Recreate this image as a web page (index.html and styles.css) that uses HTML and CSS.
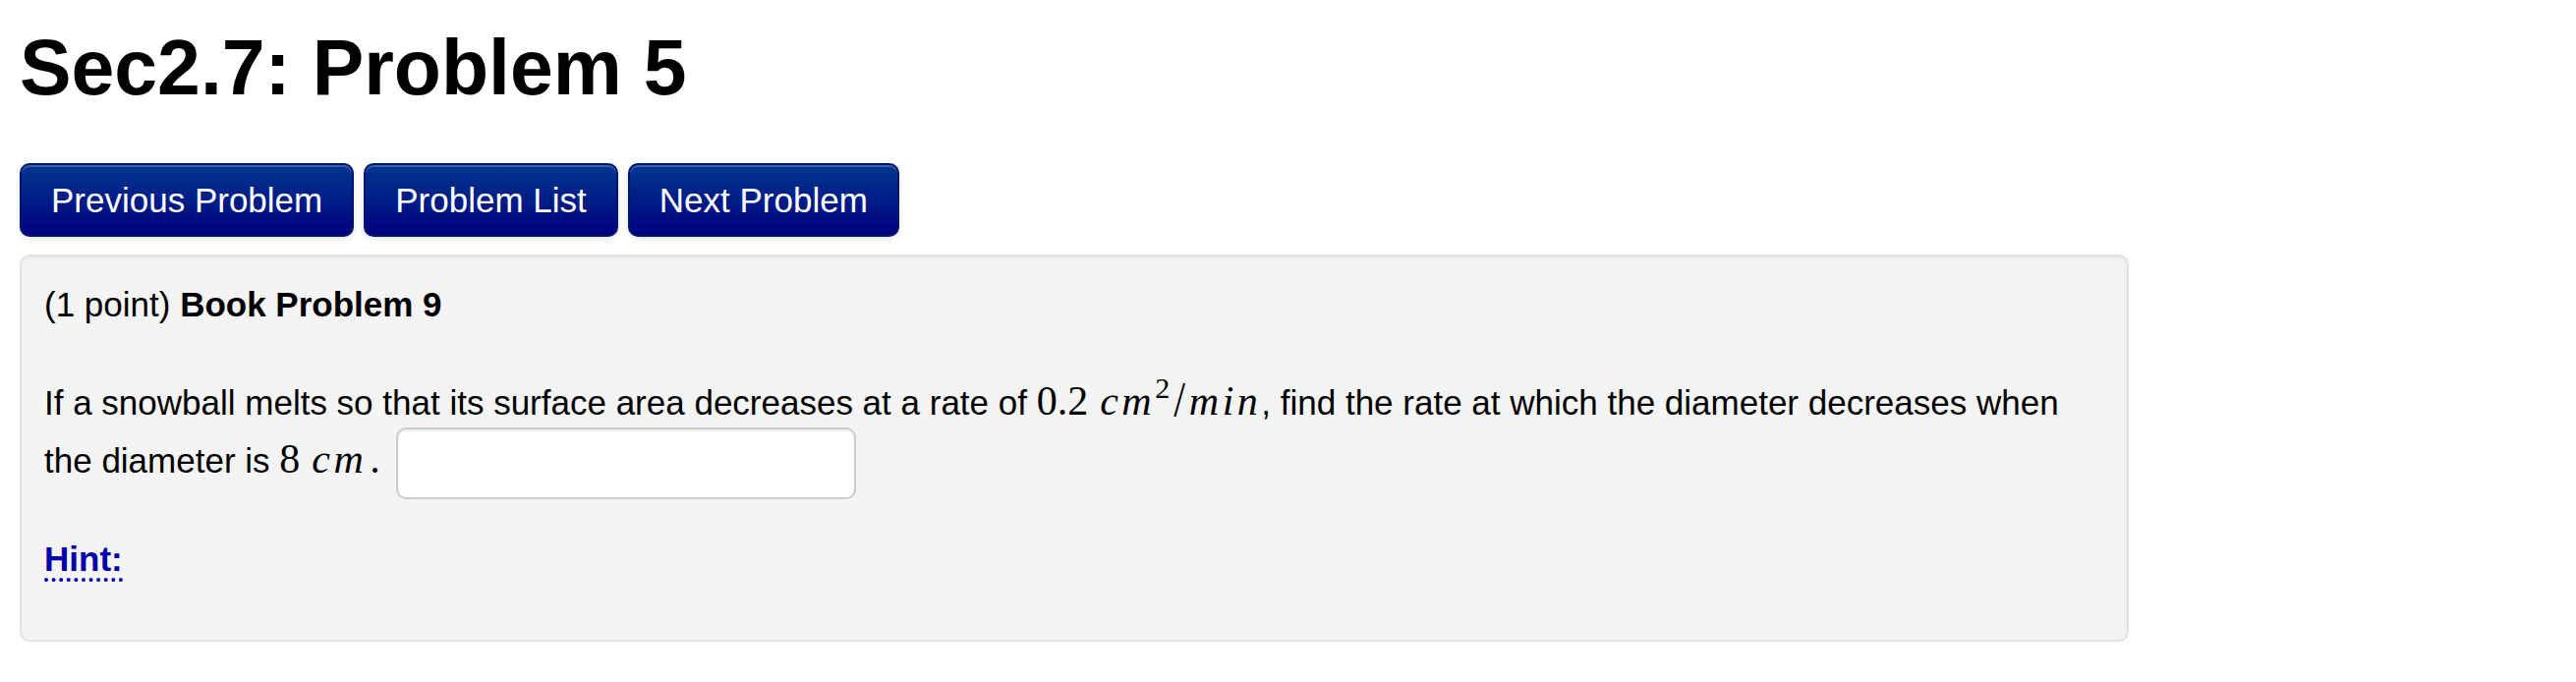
FILE: index.html
```html
<!DOCTYPE html>
<html lang="en">
<head>
<meta charset="utf-8">
<title>Sec2.7: Problem 5</title>
<link rel="stylesheet" href="styles.css">
</head>
<body>
<div class="page">
  <h1 class="title">Sec2.7: Problem 5</h1>
  <div class="nav">
    <a class="btn" href="#">Previous Problem</a>
    <a class="btn" href="#">Problem List</a>
    <a class="btn" href="#">Next Problem</a>
  </div>
  <div class="panel">
    <p class="points">(1 point) <b>Book Problem 9</b></p>
    <p class="question">If a snowball melts so that its surface area decreases at a rate of <span class="math"><span class="mn">0.2</span><span class="mi sp">cm</span><span class="sup">2</span><span class="mo">/</span><span class="mi">min</span></span>, find the rate at which the diameter decreases when<br>the diameter is <span class="math"><span class="mn">8</span><span class="mi sp">cm</span><span class="mn dot">.</span></span> <input class="answer" type="text"></p>
    <p class="hint-row"><span class="hint">Hint:</span></p>
  </div>
</div>
</body>
</html>
```
FILE: styles.css
```css
html, body {
  margin: 0;
  padding: 0;
  background: #ffffff;
}

body {
  font-family: "Liberation Sans", Arial, sans-serif;
  font-size: 35px;
  line-height: 50px;
  color: #000000;
}

.page {
  padding: 0 20px;
}

.title {
  margin: 0;
  padding-top: 25px;
  font-size: 78.75px;
  line-height: 88px;
  font-weight: bold;
}

.nav {
  display: flex;
  gap: 10px;
  margin-top: 53px;
}

.btn {
  display: block;
  box-sizing: border-box;
  height: 75px;
  padding: 0 30px;
  border: 2px solid #00166e;
  border-radius: 10px;
  background: linear-gradient(to bottom, #00358f 0%, #001a86 55%, #000080 100%);
  box-shadow: inset 0 2px 0 rgba(255, 255, 255, 0.22), 0 2px 6px rgba(0, 0, 0, 0.12);
  color: #ffffff;
  text-decoration: none;
  font-size: 35px;
  line-height: 71px;
  white-space: nowrap;
}

.panel {
  box-sizing: border-box;
  width: 2146px;
  margin-top: 18px;
  padding: 24px 23px 57px 23px;
  background: #f4f4f4;
  border: 2px solid #e2e2e2;
  border-radius: 10px;
  box-shadow: inset 0 2px 3px rgba(0, 0, 0, 0.05);
}

.panel p {
  margin: 0;
}

.question {
  margin-top: 50px !important;
}

.hint-row {
  margin-top: 36px !important;
}

.math {
  font-family: "Liberation Serif", "Times New Roman", serif;
  font-size: 42px;
  line-height: 1;
}

.mi {
  font-style: italic;
  letter-spacing: 3.5px;
}

.sp {
  margin-left: 12px;
}

.dot {
  margin-left: 3px;
}

.sup {
  font-size: 30px;
  vertical-align: 17px;
  line-height: 0;
  margin-left: 0;
}

.mo {
  display: inline-block;
  transform: scaleY(1.2);
  transform-origin: 50% 70%;
  margin: 0 4px;
}

.answer {
  box-sizing: border-box;
  width: 468px;
  height: 73px;
  margin: 0 0 0 6px;
  padding: 10px 15px;
  vertical-align: middle;
  font-family: "Liberation Sans", Arial, sans-serif;
  font-size: 35px;
  background: #ffffff;
  border: 2px solid #cccccc;
  border-radius: 10px;
  box-shadow: inset 0 2px 2px rgba(0, 0, 0, 0.075);
  outline: none;
}

.hint {
  font-weight: bold;
  color: #0000aa;
  border-bottom: 4px dotted #0000aa;
  cursor: pointer;
}
```
